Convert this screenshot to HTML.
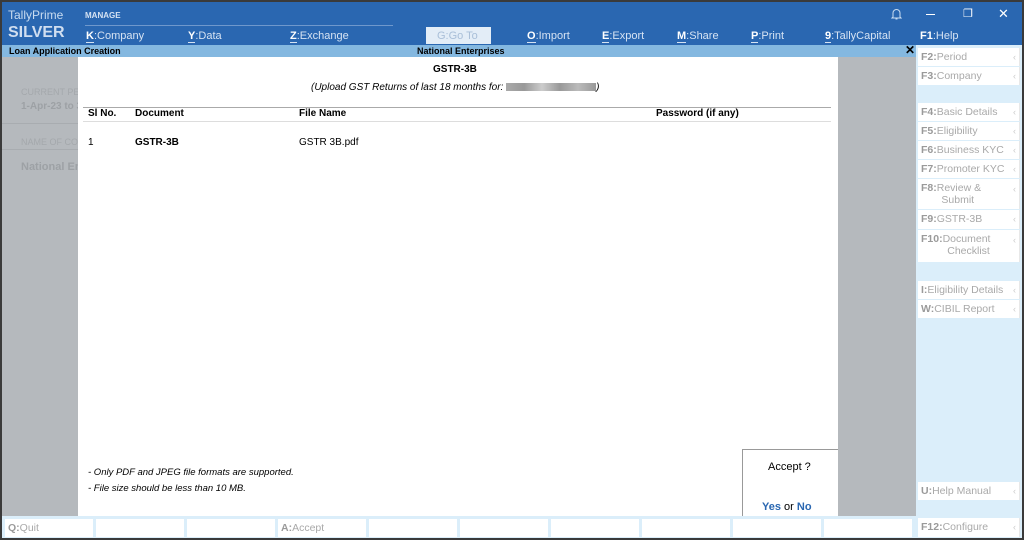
<!DOCTYPE html>
<html><head><style>
*{margin:0;padding:0;box-sizing:border-box}
body{width:1024px;height:540px;overflow:hidden;background:#3a3a3a;font-family:"Liberation Sans",Arial,sans-serif;position:relative}
.a{position:absolute}
#hdr{left:2px;top:2px;width:1020px;height:43px;background:#2a67b1;color:#c9dcf1}
.m{font-size:11px;color:#d6e3f3;position:absolute;top:28px}
.m u{text-decoration:none;border-bottom:1px solid #d6e3f3;font-weight:bold;color:#fff}
#sub{left:2px;top:45px;width:914px;height:12px;background:#84b8e0;font-size:9px;font-weight:bold;color:#000}
#bg{left:2px;top:57px;width:914px;height:459px;background:#b5b9bd}
#modal{left:78px;top:57px;width:760px;height:459px;background:#fff;font-size:10px;color:#000}
#rp{left:916px;top:45px;width:106px;height:493px;background:#dbeefa}
.b{position:absolute;left:2px;width:102px;background:#fff;font-size:10.5px;color:#a9a9a9;padding:3px 0 0 3px;border-right:1px solid #e8e8e8}
.b b{color:#9a9a9a}
.b:after{content:"‹";position:absolute;right:3px;top:4px;font-size:9px;color:#ccc}
#bot{left:2px;top:516px;width:914px;height:22px;background:#dbeefa}
.bb{position:absolute;top:3px;height:18px;width:88px;background:#fff;font-size:10.5px;color:#a9a9a9;padding:3px 0 0 3px}
</style></head><body>
<div id="hdr" class="a">
 <div class="a" style="left:6px;top:6px;font-size:12px;color:#c9dcf1">TallyPrime</div>
 <div class="a" style="left:6px;top:22px;font-size:16px;font-weight:bold;color:#d0def0">SILVER</div>
 <div class="a" style="left:83px;top:9px;font-size:8px;font-weight:bold;color:#d6e3f3">MANAGE</div>
 <div class="a" style="left:83px;top:23px;width:308px;height:1px;background:#6f98cc"></div>
 <div class="m" style="left:84px"><u>K</u>:Company</div>
 <div class="m" style="left:186px"><u>Y</u>:Data</div>
 <div class="m" style="left:288px"><u>Z</u>:Exchange</div>
 <div class="a" style="left:424px;top:25px;width:65px;height:17px;background:#e3edf7;color:#a9bfd8;font-size:11px;padding:3px 0 0 11px">G:Go To</div>
 <div class="m" style="left:525px"><u>O</u>:Import</div>
 <div class="m" style="left:600px"><u>E</u>:Export</div>
 <div class="m" style="left:675px"><u>M</u>:Share</div>
 <div class="m" style="left:749px"><u>P</u>:Print</div>
 <div class="m" style="left:823px"><u>9</u>:TallyCapital</div>
 <div class="m" style="left:918px"><b style="color:#fff">F1</b>:Help</div>
 <svg class="a" style="left:889px;top:6px" width="11" height="12" viewBox="0 0 11 12"><path d="M2 9V5a3.5 3.5 0 0 1 7 0v4l1 1H1z M4.5 11h2" fill="none" stroke="#c9dcf1" stroke-width="1"/></svg>
 <div class="a" style="left:924px;top:12px;width:9px;height:1px;background:#fff"></div>
 <div class="a" style="left:961px;top:5px;font-size:11px;color:#fff">❐</div>
 <div class="a" style="left:996px;top:4px;font-size:13px;color:#fff">✕</div>
</div>
<div id="sub" class="a"><span class="a" style="left:7px;top:1px">Loan Application Creation</span><span class="a" style="left:415px;top:1px">National Enterprises</span><span class="a" style="left:903px;top:-2px;font-size:12px">✕</span></div>
<div id="bg" class="a">
 <div class="a" style="left:19px;top:30px;font-size:9px;color:#a4a8ac">CURRENT PE</div>
 <div class="a" style="left:19px;top:44px;font-size:10px;font-weight:bold;color:#9da1a5">1-Apr-23 to 3</div>
 <div class="a" style="left:0;top:66px;width:76px;height:1px;background:#a8acb0"></div>
 <div class="a" style="left:19px;top:80px;font-size:9px;color:#a4a8ac">NAME OF CO</div>
 <div class="a" style="left:0;top:92px;width:76px;height:1px;background:#a8acb0"></div>
 <div class="a" style="left:19px;top:104px;font-size:11px;font-weight:bold;color:#9da1a5">National En</div>
</div>
<div id="modal" class="a">
 <div class="a" style="left:355px;top:7px;font-weight:bold">GSTR-3B</div>
 <div class="a" style="left:233px;top:25px;font-style:italic">(Upload GST Returns of last 18 months for: <span style="display:inline-block;width:90px;height:8px;background:linear-gradient(90deg,#aaa,#999 20%,#ccc 40%,#999 60%,#bbb 80%,#999);vertical-align:middle"></span>)</div>
 <div class="a" style="left:5px;top:50px;width:748px;height:1px;background:#aaa"></div>
 <div class="a" style="left:10px;top:51px;font-weight:bold">Sl No.</div>
 <div class="a" style="left:57px;top:51px;font-weight:bold">Document</div>
 <div class="a" style="left:221px;top:51px;font-weight:bold">File Name</div>
 <div class="a" style="left:578px;top:51px;font-weight:bold">Password (if any)</div>
 <div class="a" style="left:5px;top:64px;width:748px;height:1px;background:#ddd"></div>
 <div class="a" style="left:10px;top:80px">1</div>
 <div class="a" style="left:57px;top:80px;font-weight:bold">GSTR-3B</div>
 <div class="a" style="left:221px;top:80px">GSTR 3B.pdf</div>
 <div class="a" style="left:10px;top:410px;font-style:italic;font-size:9.5px">- Only PDF and JPEG file formats are supported.</div>
 <div class="a" style="left:10px;top:426px;font-style:italic;font-size:9.5px">- File size should be less than 10 MB.</div>
 <div class="a" style="left:664px;top:392px;width:96px;height:67px;border:1px solid #999;border-right:none;border-bottom:none;background:#fff">
  <div class="a" style="left:25px;top:11px;font-size:11px">Accept ?</div>
  <div class="a" style="left:19px;top:51px;font-size:11px"><b style="color:#2a67b1">Yes</b> or <b style="color:#2a67b1">No</b></div>
 </div>
</div>
<div id="rp" class="a">
 <div class="b" style="top:3px;height:18px"><b>F2:</b>Period</div>
 <div class="b" style="top:22px;height:18px"><b>F3:</b>Company</div>
 <div class="b" style="top:58px;height:18px"><b>F4:</b>Basic Details</div>
 <div class="b" style="top:77px;height:18px"><b>F5:</b>Eligibility</div>
 <div class="b" style="top:96px;height:18px"><b>F6:</b>Business KYC</div>
 <div class="b" style="top:115px;height:18px"><b>F7:</b>Promoter KYC</div>
 <div class="b" style="top:134px;height:30px;line-height:12px"><b>F8:</b>Review &amp;<br>&nbsp;&nbsp;&nbsp;&nbsp;&nbsp;&nbsp;&nbsp;Submit</div>
 <div class="b" style="top:165px;height:19px"><b>F9:</b>GSTR-3B</div>
 <div class="b" style="top:185px;height:32px;line-height:12px"><b>F10:</b>Document<br>&nbsp;&nbsp;&nbsp;&nbsp;&nbsp;&nbsp;&nbsp;&nbsp;&nbsp;Checklist</div>
 <div class="b" style="top:236px;height:18px"><b>I:</b>Eligibility Details</div>
 <div class="b" style="top:255px;height:18px"><b>W:</b>CIBIL Report</div>
 <div class="b" style="top:437px;height:18px"><b>U:</b>Help Manual</div>
 <div class="b" style="top:473px;height:19px"><b>F12:</b>Configure</div>
</div>
<div id="bot" class="a">
 <div class="bb" style="left:3px"><b style="color:#9a9a9a">Q:</b>Quit</div>
 <div class="bb" style="left:94px"></div>
 <div class="bb" style="left:185px"></div>
 <div class="bb" style="left:276px"><b style="color:#9a9a9a">A:</b>Accept</div>
 <div class="bb" style="left:367px"></div>
 <div class="bb" style="left:458px"></div>
 <div class="bb" style="left:549px"></div>
 <div class="bb" style="left:640px"></div>
 <div class="bb" style="left:731px"></div>
 <div class="bb" style="left:822px"></div>
</div>
</body></html>
